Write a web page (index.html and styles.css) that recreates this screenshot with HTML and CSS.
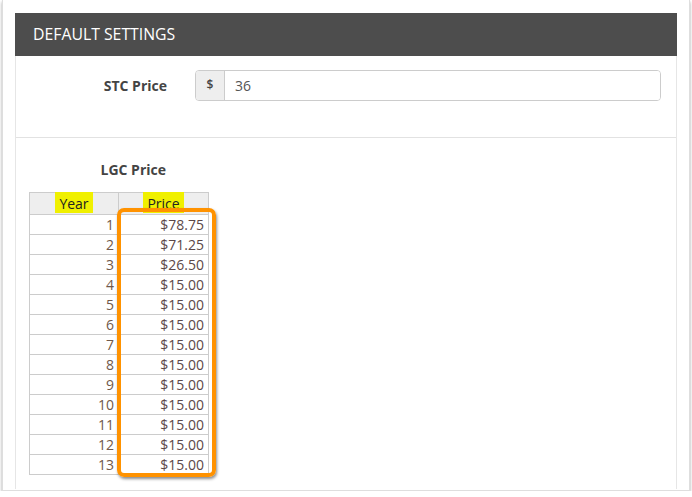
FILE: index.html
```html
<!DOCTYPE html>
<html lang="en">
<head>
  <meta charset="UTF-8" />
  <title>Default Settings</title>
  <link rel="stylesheet" href="styles.css">
</head>
<body>
  <div class="janela">
    <div class="painel">
      <div class="painel-titulo">DEFAULT SETTINGS</div>
      <div class="painel-corpo">
        <!-- STC -->
        <div class="linha-form">
          <label class="rotulo">STC Price</label>
          <div class="grupo-input">
            <span class="addon">$</span>
            <input type="text" value="36" />
          </div>
        </div>

        <div class="separador"></div>

        <!-- LGC -->
        <div class="linha-lgc">
          <label class="rotulo">LGC Price</label>
        </div>

        <div class="tabela-wrap">
          <table class="tabela">
            <thead>
              <tr>
                <th><span class="marca">Year</span></th>
                <th><span class="marca">Price</span></th>
              </tr>
            </thead>
            <tbody id="linhas"></tbody>
          </table>
          <div class="destaque-caixa"></div>
        </div>
      </div>
    </div>
  </div>

  <script>
    const precos = ['78.75', '71.25', '26.50', '15.00', '15.00', '15.00', '15.00',
                    '15.00', '15.00', '15.00', '15.00', '15.00', '15.00'];
    const corpo = document.getElementById('linhas');
    precos.forEach((p, i) => {
      const tr = document.createElement('tr');
      tr.innerHTML = `<td class="ano">${i + 1}</td><td class="preco">$${p}</td>`;
      corpo.appendChild(tr);
    });
  </script>
</body>
</html>
```

FILE: styles.css
```css
:root {
  --cor-titulo: #4d4d4d;
  --cor-texto: #555555;
  --cor-borda: #cccccc;
  --cor-laranja: #ff9200;
}

* {
  box-sizing: border-box;
  margin: 0;
  padding: 0;
}

body {
  background: #fff;
  font-family: 'Open Sans', 'Liberation Sans', sans-serif;
  color: var(--cor-texto);
}

/* moldura da captura */
.janela {
  margin: 0 2px;
  height: 491px;
  padding: 13px 12px 0 12px;
  border: 1px solid #dedede;
  border-top: none;
  box-shadow: 0 2px 3px rgba(0, 0, 0, 0.35);
}

.painel {
  height: 100%;
  display: flex;
  flex-direction: column;
}

.painel-titulo {
  height: 43px;
  background: var(--cor-titulo);
  color: #fff;
  font-size: 15.8px;
  line-height: 43px;
  padding-left: 18px;
}

.painel-corpo {
  flex: 1;
  border-left: 1px solid #e6e6e6;
  border-right: 1px solid #e6e6e6;
  margin-bottom: 1px;
}

.linha-form {
  display: flex;
  align-items: center;
  gap: 28px;
  padding: 14px 15px 0 0;
}

.rotulo {
  width: 151px;
  text-align: right;
  font-weight: 700;
  font-size: 14px;
  color: #444;
}

.grupo-input {
  flex: 1;
  display: flex;
  height: 31px;
  border: 1px solid var(--cor-borda);
  border-radius: 4px;
  overflow: hidden;
}

.addon {
  width: 29px;
  background: #eeeeee;
  border-right: 1px solid var(--cor-borda);
  text-align: center;
  font-size: 12px;
  font-weight: 600;
  line-height: 28px;
  color: #444;
}

.grupo-input input {
  flex: 1;
  border: none;
  outline: none;
  padding: 0 10px;
  font-family: inherit;
  font-size: 14px;
  color: var(--cor-texto);
}

.separador {
  height: 1px;
  background: #e2e2e2;
  margin-top: 36px;
}

.linha-lgc {
  display: flex;
  padding-top: 22px;
  line-height: 20px;
  margin-left: -1px;
}

.tabela-wrap {
  position: relative;
  width: 180px;
  margin: 12px 0 0 13px;
}

.tabela {
  border-collapse: collapse;
  width: 180px;
  font-size: 14px;
}

.tabela th {
  background: #eeeeee;
  border: 1px solid var(--cor-borda);
  height: 22px;
  font-weight: 400;
  color: #222;
  text-align: center;
  padding: 0;
  line-height: 20px;
}

.tabela th:first-child {
  width: 89px;
}

.marca {
  background: #f0f000;
  padding: 2px 4px 0;
}

.tabela td {
  border: 1px solid var(--cor-borda);
  height: 20px;
  line-height: 18px;
  text-align: right;
  padding: 0 4px 0 0;
}

.ano {
  color: #70584a;
}

.preco {
  color: #5c4848;
}

/* contorno laranja por cima da coluna de preços */
.destaque-caixa {
  position: absolute;
  left: 88px;
  top: 16px;
  width: 99px;
  height: 269px;
  border: 4px solid var(--cor-laranja);
  border-radius: 7px;
  box-shadow: 1px 2px 3px rgba(0, 0, 0, 0.45);
  pointer-events: none;
}
```
